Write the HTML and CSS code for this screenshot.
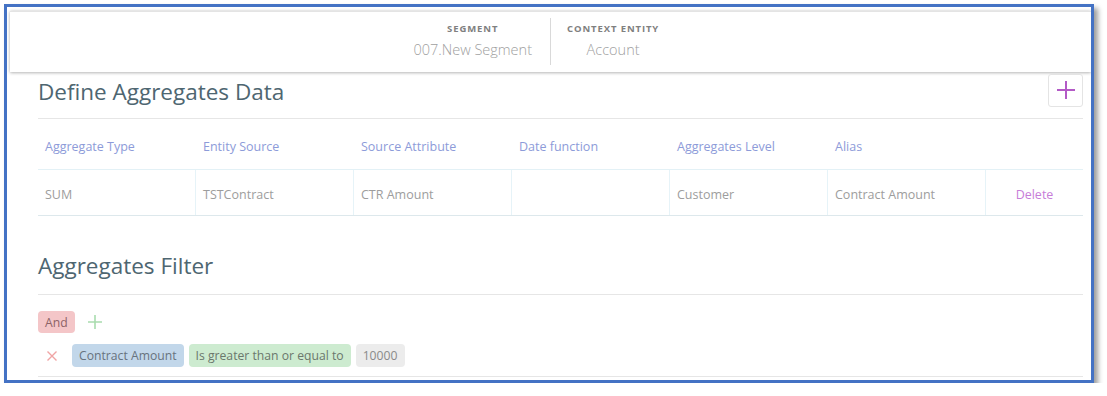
FILE: index.html
```html
<!DOCTYPE html>
<html>
<head>
<meta charset="utf-8">
<link rel="stylesheet" href="styles.css">
</head>
<body>
<div class="frame">
  <div class="header">
    <div class="half left">
      <div class="info">
        <div class="label">SEGMENT</div>
        <div class="value">007.New Segment</div>
      </div>
    </div>
    <div class="divider"></div>
    <div class="half right">
      <div class="info">
        <div class="label">CONTEXT ENTITY</div>
        <div class="value">Account</div>
      </div>
    </div>
  </div>
  <div class="content">
    <div class="section-head">
      <h2 class="title">Define Aggregates Data</h2>
      <button class="add-btn" aria-label="Add">
        <svg width="20" height="20" viewBox="0 0 20 20"><path d="M10 1v18M1 10h18" stroke="#b35ac6" stroke-width="2" fill="none"/></svg>
      </button>
    </div>
    <div class="table">
      <div class="row head">
        <div class="cell">Aggregate Type</div>
        <div class="cell">Entity Source</div>
        <div class="cell">Source Attribute</div>
        <div class="cell">Date function</div>
        <div class="cell">Aggregates Level</div>
        <div class="cell">Alias</div>
        <div class="cell"></div>
      </div>
      <div class="row data">
        <div class="cell">SUM</div>
        <div class="cell">TSTContract</div>
        <div class="cell">CTR Amount</div>
        <div class="cell"></div>
        <div class="cell">Customer</div>
        <div class="cell">Contract Amount</div>
        <div class="cell action">Delete</div>
      </div>
    </div>
    <div class="section-head filter-head">
      <h2 class="title">Aggregates Filter</h2>
    </div>
    <div class="filter">
      <div class="group-row">
        <span class="chip and">And</span>
        <svg class="plus-green" width="16" height="16" viewBox="0 0 16 16"><path d="M8 1v14M1 8h14" stroke="#a9dcae" stroke-width="1.6" fill="none"/></svg>
      </div>
      <div class="rule-row">
        <svg class="remove" width="12" height="12" viewBox="0 0 12 12"><path d="M1.5 1.5l9 9M10.5 1.5l-9 9" stroke="#f0a4a4" stroke-width="1.4" fill="none"/></svg>
        <span class="chip field">Contract Amount</span>
        <span class="chip op">Is greater than or equal to</span>
        <span class="chip val">10000</span>
      </div>
    </div>
  </div>
</div>
</body>
</html>
```
FILE: styles.css
```css
* { box-sizing: border-box; }
body {
  margin: 0;
  background: #fff;
  font-family: "Open Sans", "Noto Sans", sans-serif;
}
.frame {
  margin: 4px 0 0 4px;
  width: 1090px;
  height: 379px;
  border: 3px solid #4472c4;
  box-shadow: 4px 4px 5px rgba(0,0,0,0.38);
  overflow: hidden;
  padding: 4px 0 0 3px;
  background: #fff;
}
.header {
  height: 61px;
  display: flex;
  border-top: 1px solid #e4e4e4;
  box-shadow: 0 1px 3px rgba(0,0,0,0.28), 0 -1px 3px rgba(0,0,0,0.08);
  background: #fff;
}
.half { flex: 1; display: flex; }
.half.left { justify-content: flex-end; }
.info { text-align: center; padding-top: 10px; }
.left .info { padding-right: 18px; }
.right .info { padding-left: 16px; }
.label {
  font-size: 9.5px;
  font-weight: 700;
  letter-spacing: 0.9px;
  color: #808080;
  line-height: 14px;
}
.value {
  font-size: 14.5px;
  font-weight: 300;
  color: #a0a0a0;
  line-height: 20px;
  margin-top: 4px;
}
.divider {
  width: 1px;
  background: #d9d9d9;
  margin: 6px 0 7px;
}
.content { padding: 0 8px 0 28px; }
.section-head {
  height: 47px;
  display: flex;
  align-items: center;
  justify-content: space-between;
  border-bottom: 1px solid #e6e6e6;
}
.title {
  margin: 0;
  font-size: 22.5px;
  font-weight: 400;
  color: #4e6671;
  padding-bottom: 8px;
}
.add-btn {
  width: 35px;
  height: 33px;
  border: 1px solid #e4e4e4;
  border-radius: 3px;
  background: #fff;
  display: flex;
  align-items: center;
  justify-content: center;
  padding: 0;
  margin-bottom: 10px;
}
.table { font-size: 12.5px; }
.row {
  display: grid;
  grid-template-columns: repeat(6, 158px) 1fr;
}
.row.head { height: 50px; }
.row.head .cell {
  color: #8d9bd9;
  padding: 19px 7px 0;
}
.row.data {
  height: 47px;
  border-top: 1px solid #e3f1f6;
  border-bottom: 1px solid #dde8ec;
}
.row.data .cell {
  color: #9d9d9d;
  padding: 16px 7px 0;
  border-right: 1px solid #e6f3f8;
}
.row.data .cell:last-child { border-right: 0; }
.row.data .cell.action { color: #c77dd8; text-align: center; }
.filter-head { height: 79px; align-items: flex-end; padding-bottom: 13px; }
.filter-head .title { padding-bottom: 0; }
.filter { border-bottom: 1px solid #e6e6e6; padding: 16px 0 9px; }
.group-row { display: flex; align-items: center; gap: 12px; height: 22px; }
.rule-row { display: flex; align-items: center; gap: 5px; margin-top: 11px; height: 23px; }
.remove { margin: 0 9px 0 8px; }
.chip {
  display: inline-flex;
  align-items: center;
  height: 100%;
  padding: 0 7px;
  border-radius: 4px;
  font-size: 12.2px;
  color: #6c6c6c;
}
.chip.and { background: #f4c6c8; color: #8c6266; }
.chip.field { background: #c2d7ea; color: #68737e; }
.chip.op { background: #cdebd0; color: #6b776c; }
.chip.val { background: #ececec; color: #8a8a8a; }
```
